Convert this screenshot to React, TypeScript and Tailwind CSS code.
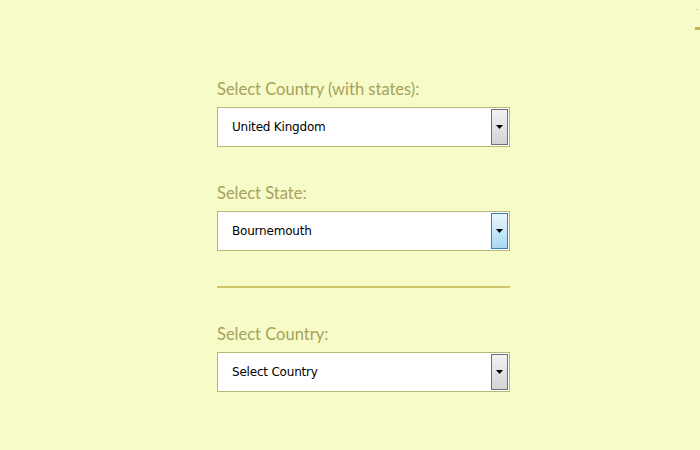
import React from 'react';

const Arrow = ({ hover }: { hover?: boolean }) => (
  <div
    className={
      'absolute right-[1px] top-[1px] bottom-[1px] w-[17px] border flex items-center justify-center ' +
      (hover
        ? 'border-[#3c7fb1] bg-gradient-to-b from-[#eaf6fd] to-[#a7d9f5]'
        : 'border-[#707070] bg-gradient-to-b from-[#f2f2f2] to-[#d4d4d4]')
    }
  >
    <svg width="7" height="4" viewBox="0 0 7 4">
      <path d="M0 0h7L3.5 4z" fill="#000" />
    </svg>
  </div>
);

const Field = ({ label, value, hover }: { label: string; value: string; hover?: boolean }) => (
  <div className="flex flex-col">
    <label className="text-[16.5px] leading-[20px] text-[#a6a15c] mb-[8px] font-['Lato',sans-serif]">{label}</label>
    <div className="relative h-[40px] w-[293px] bg-white border border-[#b8b777]">
      <span className="absolute left-[14px] top-[11px] text-[12px] leading-[16px] text-black font-['DejaVu_Sans',sans-serif] tracking-[-0.2px]">
        {value}
      </span>
      <Arrow hover={hover} />
    </div>
  </div>
);

export default function App() {
  return (
    <div className="relative w-[700px] h-[450px] bg-[#f7fbc7] overflow-hidden">
      <div className="absolute right-0 top-[27px] w-[5px] h-[3px] bg-[#c6b651]" />
      <div className="absolute right-[2px] top-[9px] w-[2px] h-[1px] bg-[#d6d08a]" />
      <div className="pl-[217px] pt-[79px] flex flex-col">
        <Field label="Select Country (with states):" value="United Kingdom" />
        <div className="h-[36px]" />
        <Field label="Select State:" value="Bournemouth" hover />
        <div className="mt-[35px] w-[293px] h-[2px] bg-[#cfc467]" />
        <div className="h-[36px]" />
        <Field label="Select Country:" value="Select Country" />
      </div>
    </div>
  );
}
